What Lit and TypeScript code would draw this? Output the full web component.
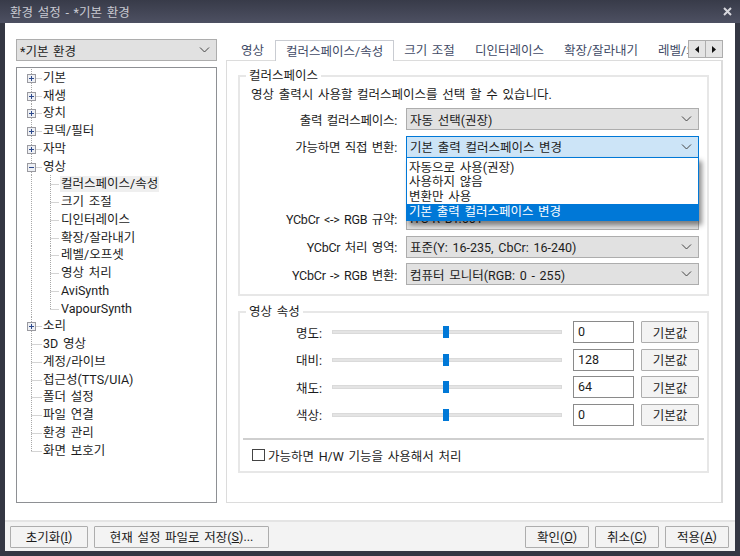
import { LitElement, html, css, svg } from "lit";
import { customElement } from "lit/decorators.js";

const chevron = html`<svg class="chev" width="11" height="6" viewBox="0 0 11 6"><path d="M1 .5l4.5 4.5L10 .5" fill="none" stroke="#444" stroke-width="1"/></svg>`;

type Node = { t: string; exp?: "+" | "-"; child?: boolean; sel?: boolean; last?: boolean; lastChild?: boolean };
const tree: Node[] = [
  { t: "기본", exp: "+" }, { t: "재생", exp: "+" }, { t: "장치", exp: "+" }, { t: "코덱/필터", exp: "+" },
  { t: "자막", exp: "+" }, { t: "영상", exp: "-" },
  { t: "컬러스페이스/속성", child: true, sel: true }, { t: "크기 조절", child: true }, { t: "디인터레이스", child: true },
  { t: "확장/잘라내기", child: true }, { t: "레벨/오프셋", child: true }, { t: "영상 처리", child: true },
  { t: "AviSynth", child: true }, { t: "VapourSynth", child: true, lastChild: true },
  { t: "소리", exp: "+" }, { t: "3D 영상" }, { t: "계정/라이브" }, { t: "접근성(TTS/UIA)" }, { t: "폴더 설정" },
  { t: "파일 연결" }, { t: "환경 관리" }, { t: "화면 보호기", last: true },
];

const gutter = (n: Node) => svg`
  <line x1="14.5" y1="0" x2="14.5" y2="${n.last ? 9.5 : 18}" class="dot"/>
  ${n.child
    ? svg`<line x1="33.5" y1="0" x2="33.5" y2="${n.lastChild ? 9.5 : 18}" class="dot"/><line x1="33.5" y1="9.5" x2="42" y2="9.5" class="dot"/>`
    : svg`<line x1="14.5" y1="9.5" x2="25" y2="9.5" class="dot"/>`}
  ${n.exp ? svg`
    <rect x="10.5" y="5.5" width="8" height="8" fill="#eef0f4" stroke="#9a9aa0"/>
    <line x1="12" y1="9.5" x2="17" y2="9.5" stroke="#2e4a8c"/>
    ${n.exp === "+" ? svg`<line x1="14.5" y1="7" x2="14.5" y2="12" stroke="#2e4a8c"/>` : ""}` : ""}
`;

@customElement("app-root")
export class AppRoot extends LitElement {
  static styles = css`
    :host { display: block; width: 740px; height: 556px; overflow: hidden;
      font-family: Roboto, "Noto Sans CJK KR", sans-serif; font-size: 12.5px; color: #1c1c1c; word-spacing: 1.6px; }
    .win { box-sizing: border-box; width: 740px; height: 556px; display: flex; flex-direction: column;
      background: #343743; padding: 0 5px 5px 5px; }
    .title { height: 23px; flex: none; margin: 0 -5px; padding: 0 7px 0 10px; display: flex; align-items: center; justify-content: space-between;
      background: linear-gradient(#383b49, #4d5062); color: #c9cad2; font-size: 12.5px; }
    .client { flex: 1; min-height: 0; display: flex; flex-direction: column; background: #fff; }
    .main { flex: 1; min-height: 0; display: flex; gap: 9px; padding: 16px 12px 17px 11px; }
    .left { width: 201px; flex: none; display: flex; flex-direction: column; gap: 6px; }
    .select { box-sizing: border-box; height: 22px; display: flex; align-items: center; justify-content: space-between; padding: 0 6px 0 3px;
      background: #e1e1e1; border: 1px solid #adadad; position: relative; }
    .select.focus { background: #cce4f7; border-color: #0078d7; }
    .chev { flex: none; }
    .tree { flex: 1; border: 1px solid #8e9094; box-sizing: border-box; padding-top: 1px; background: #fff; }
    .node { height: 17.76px; display: flex; align-items: center; white-space: nowrap; }
    .node svg { flex: none; overflow: visible; }
    .dot { stroke: #a8a8a8; stroke-dasharray: 1 1; fill: none; }
    .node .label { margin-left: -1px; padding: 0 1px; line-height: 16px; }
    .gut { width: 26px; height: 18px; }
    .gut.c { width: 44px; }
    .node .sel { background: #efefef; }
    .right { flex: 1; min-width: 0; display: flex; flex-direction: column; position: relative; }
    .tabs { height: 22px; flex: none; display: flex; align-items: flex-end; overflow: hidden; position: relative; z-index: 1; margin-bottom: -1px; }
    .tab { height: 19px; line-height: 17px; color: #414a66; white-space: nowrap; flex: none; }
    .tab.first { padding: 0 12px 0 15px; width: 22px; }
    .tab.active { height: 21px; box-sizing: border-box; background: #fff; border: 1px solid #c9ccd2; border-bottom: none; padding: 0 10px; line-height: 21px; }
    .tab.plain { padding: 0 10px; }
    .scroll { position: absolute; z-index: 2; top: 1px; right: 0; display: flex; }
    .scroll div { box-sizing: border-box; width: 18px; height: 18px; background: #e4e4e4; border: 1px solid #adadad; display: flex; align-items: center; justify-content: center; }
    .scroll div + div { margin-left: -1px; }
    .pane { flex: 1; min-height: 0; border: 1px solid #dcdcdc; border-right-width: 2px; box-sizing: border-box; padding: 8px 12px 0 11px; display: flex; flex-direction: column; gap: 9px; background: #fff; }
    fieldset { margin: 0; padding: 0; border: 2px solid #e7e7e7; box-sizing: border-box; min-width: 0; flex: none; }
    legend { margin-left: 6px; padding: 0 3px; line-height: 14px; height: 14px; }
    .g1 { height: 227px; padding: 0 8px 0 0; }
    .g2 { height: 168px; }
    .desc { height: 20px; line-height: 20px; padding-left: 11px; margin-top: 2px; white-space: nowrap; }
    .rows { display: flex; flex-direction: column; gap: 5.6px; margin-top: 3px; }
    .row { display: grid; grid-template-columns: 157px 293px; column-gap: 9px; align-items: center; white-space: nowrap; }
    .row.late { margin-top: 44.8px; }
    .lbl { text-align: right; letter-spacing: -0.25px; }
    .popup { position: absolute; z-index: 5; left: -1px; right: -1px; top: 20px; background: #fff; border: 1px solid #0078d7; box-shadow: 3px 4px 5px rgba(0,0,0,.45); padding-top: 3px; }
    .popup div { height: 14.6px; line-height: 14.6px; padding-left: 2px; }
    .popup div.on { background: #0078d7; color: #fff; height: 16px; line-height: 16px; }
    .sliders { display: flex; flex-direction: column; gap: 5.5px; margin-top: 2px; }
    .srow { display: grid; grid-template-columns: 82px 240px 72px 65px; align-items: center; height: 22px; }
    .srow .sl { text-align: right; }
    .track { height: 4px; background: #e4e4e4; border: 1px solid #dadada; box-sizing: border-box; margin-left: 10px; width: 230px; position: relative; display: block; }
    .thumb { position: absolute; left: 110px; top: -5px; width: 6px; height: 12px; background: #0078d7; }
    .edit { box-sizing: border-box; height: 22px; width: 61px; margin-left: 11px; border: 1px solid #8a8a8a; background: #fff; padding-left: 4px; line-height: 19px; }
    .btn { box-sizing: border-box; height: 22px; border: 1px solid #adadad; background: #f3f3f3; display: flex; align-items: center; justify-content: center; white-space: nowrap; border-radius: 1px; }
    .srow .btn { width: 58px; margin-left: 7px; }
    hr { margin: 12px 3px 0 3px; border: none; border-top: 2px solid #cfcfcf; height: 0; }
    .check { display: flex; align-items: center; gap: 3px; margin: 6px 0 0 12px; }
    .box { width: 13px; height: 12px; border: 1px solid #444; box-sizing: border-box; background: #fff; }
    .footer { height: 31px; flex: none; display: flex; align-items: center; gap: 6px; padding: 0 6px 0 5px; background: #f3f3f3; border-top: 2px solid #e4e4e4; box-sizing: border-box; }
    .sp { flex: 1; }
    u { text-underline-offset: 1px; }
    .w78 { width: 78px; } .w175 { width: 175px; } .w64 { width: 64px; }
  `;

  render() {
    const sliders = [["명도:", "0"], ["대비:", "128"], ["채도:", "64"], ["색상:", "0"]];
    return html`<div class="win">
      <div class="title"><span>환경 설정 - *기본 환경</span>
        <svg width="11" height="11" viewBox="0 0 11 11"><path d="M2 2l7 7M9 2l-7 7" stroke="#d8d8de" stroke-width="2"/></svg></div>
      <div class="client">
        <div class="main">
          <div class="left">
            <div class="select"><span>*기본 환경</span>${chevron}</div>
            <div class="tree">
              ${tree.map(n => html`<div class="node">
                <svg class="gut ${n.child ? "c" : ""}" viewBox="0 0 ${n.child ? 44 : 26} 18">${gutter(n)}</svg>
                <span class="label ${n.sel ? "sel" : ""}">${n.t}</span></div>`)}
            </div>
          </div>
          <div class="right">
            <div class="tabs">
              <div class="tab first">영상</div>
              <div class="tab active">컬러스페이스/속성</div>
              <div class="tab plain">크기 조절</div>
              <div class="tab plain">디인터레이스</div>
              <div class="tab plain">확장/잘라내기</div>
              <div class="tab plain">레벨/오프셋</div>
            </div>
            <div class="scroll">
              <div><svg width="4" height="7" viewBox="0 0 4 7"><path d="M4 0v7L0 3.5z" fill="#111"/></svg></div>
              <div><svg width="4" height="7" viewBox="0 0 4 7"><path d="M0 0v7l4-3.5z" fill="#111"/></svg></div>
            </div>
            <div class="pane">
              <fieldset class="g1"><legend>컬러스페이스</legend>
                <div class="desc">영상 출력시 사용할 컬러스페이스를 선택 할 수 있습니다.</div>
                <div class="rows">
                  <div class="row"><span class="lbl">출력 컬러스페이스:</span><div class="select"><span>자동 선택(권장)</span>${chevron}</div></div>
                  <div class="row"><span class="lbl">가능하면 직접 변환:</span><div class="select focus"><span>기본 출력 컬러스페이스 변경</span>${chevron}
                    <div class="popup"><div>자동으로 사용(권장)</div><div>사용하지 않음</div><div>변환만 사용</div><div class="on">기본 출력 컬러스페이스 변경</div></div></div></div>
                  <div class="row late"><span class="lbl">YCbCr &lt;-&gt; RGB 규약:</span><div class="select"><span>ITU-R BT.601</span>${chevron}</div></div>
                  <div class="row"><span class="lbl">YCbCr 처리 영역:</span><div class="select"><span>표준(Y: 16-235, CbCr: 16-240)</span>${chevron}</div></div>
                  <div class="row"><span class="lbl">YCbCr -&gt; RGB 변환:</span><div class="select"><span>컴퓨터 모니터(RGB: 0 - 255)</span>${chevron}</div></div>
                </div>
              </fieldset>
              <fieldset class="g2"><legend>영상 속성</legend>
                <div class="sliders">
                  ${sliders.map(([l, v]) => html`<div class="srow"><span class="sl">${l}</span><span class="track"><span class="thumb"></span></span><div class="edit">${v}</div><div class="btn">기본값</div></div>`)}
                </div>
                <hr />
                <div class="check"><span class="box"></span><span>가능하면 H/W 기능을 사용해서 처리</span></div>
              </fieldset>
            </div>
          </div>
        </div>
        <div class="footer">
          <div class="btn w78">초기화(<u>I</u>)</div>
          <div class="btn w175">현재 설정 파일로 저장(<u>S</u>)...</div>
          <div class="sp"></div>
          <div class="btn w64">확인(<u>O</u>)</div>
          <div class="btn w64">취소(<u>C</u>)</div>
          <div class="btn w64">적용(<u>A</u>)</div>
        </div>
      </div>
    </div>`;
  }
}
